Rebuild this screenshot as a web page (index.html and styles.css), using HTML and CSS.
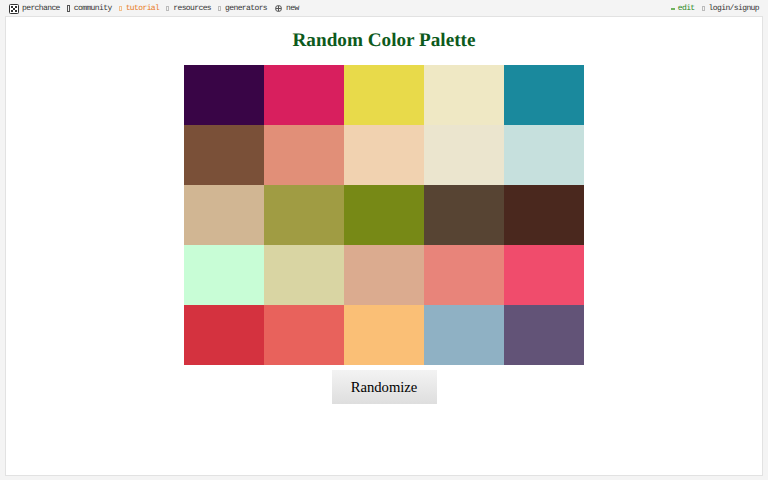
FILE: index.html
```html
<!DOCTYPE html>
<html lang="en">
<head>
<meta charset="utf-8">
<title>Random Color Palette</title>
<link rel="stylesheet" href="styles.css">
</head>
<body>
<nav class="topbar">
  <div class="links">
    <a class="link brand">
      <svg class="die" width="10" height="10" viewBox="0 0 10 10"><rect x="0.5" y="0.5" width="9" height="9" rx="1" fill="#fff" stroke="#333"/><rect x="2" y="2" width="2" height="2" fill="#333"/><rect x="6" y="2" width="2" height="2" fill="#333"/><rect x="4" y="4" width="2" height="2" fill="#333"/><rect x="2" y="6" width="2" height="2" fill="#333"/><rect x="6" y="6" width="2" height="2" fill="#333"/></svg>
      perchance</a>
    <a class="link"><span class="tofu tall"></span>community</a>
    <a class="link orange"><span class="tofu faint"></span>tutorial</a>
    <a class="link"><span class="tofu faint"></span>resources</a>
    <a class="link"><span class="tofu faint"></span>generators</a>
    <a class="link new">
      <svg class="globe" width="7" height="7" viewBox="0 0 7 7"><circle cx="3.5" cy="3.5" r="3" fill="none" stroke="#555"/><path d="M3.5 1V6M1 3.5H6" stroke="#555"/></svg>
      new</a>
  </div>
  <div class="links">
    <a class="link green"><span class="pencil"></span>edit</a>
    <a class="link"><span class="tofu faint"></span>login/signup</a>
  </div>
</nav>
<main class="panel">
  <h1 class="title">Random Color Palette</h1>
  <div class="palette">
    <div class="c" style="background:#390546"></div>
    <div class="c" style="background:#d81f5e"></div>
    <div class="c" style="background:#e8da4a"></div>
    <div class="c" style="background:#efe8c4"></div>
    <div class="c" style="background:#1a899d"></div>
    <div class="c" style="background:#7a5038"></div>
    <div class="c" style="background:#e18f78"></div>
    <div class="c" style="background:#f1d2b0"></div>
    <div class="c" style="background:#ebe5ce"></div>
    <div class="c" style="background:#c6e0dd"></div>
    <div class="c" style="background:#d1b693"></div>
    <div class="c" style="background:#a09c43"></div>
    <div class="c" style="background:#778916"></div>
    <div class="c" style="background:#574433"></div>
    <div class="c" style="background:#4a281e"></div>
    <div class="c" style="background:#c8fdd6"></div>
    <div class="c" style="background:#d9d5a3"></div>
    <div class="c" style="background:#dbab8f"></div>
    <div class="c" style="background:#e8847a"></div>
    <div class="c" style="background:#f04c6c"></div>
    <div class="c" style="background:#d4323f"></div>
    <div class="c" style="background:#e8625c"></div>
    <div class="c" style="background:#fabf76"></div>
    <div class="c" style="background:#8fb1c4"></div>
    <div class="c" style="background:#625377"></div>
  </div>
  <button class="btn">Randomize</button>
</main>
</body>
</html>
```
FILE: styles.css
```css
* { box-sizing: border-box; }
html, body { height: 100%; }
body {
  margin: 0;
  background: #f4f4f4;
  display: flex;
  flex-direction: column;
  overflow: hidden;
  text-rendering: geometricPrecision;
}
.topbar {
  height: 16px;
  flex: none;
  display: flex;
  justify-content: space-between;
  align-items: center;
  padding: 1px 9px 0 9px;
  font-family: "Liberation Mono", monospace;
  font-size: 8px;
  letter-spacing: -0.6px;
  color: #333;
}
.links { display: flex; align-items: center; gap: 7px; }
.link { display: flex; align-items: center; gap: 4px; white-space: nowrap; }
.orange { color: #e8791e; }
.green { color: #2a8a1e; }
.green { gap: 3px; }
.brand { gap: 3px; }
.new { margin-left: 1px; }
.tofu {
  display: inline-block;
  width: 3px;
  height: 5px;
  border: 1px solid #bbb;
}
.tofu.tall { height: 7px; border-color: #555; }
.tofu.faint { border-color: #bbb; }
.orange .tofu { border-color: #f2c08e; }
.pencil { display: inline-block; width: 4px; height: 2px; background: #6fb35f; }
.panel {
  flex: 1;
  margin: 0 5px 4px 5px;
  background: #fff;
  border: 1px solid #e2e2e2;
  display: flex;
  flex-direction: column;
  align-items: center;
}
.title {
  margin: 13px 0 0;
  font-family: "Liberation Serif", serif;
  font-size: 19.2px;
  line-height: 22px;
  font-weight: bold;
  color: #0d5a1c;
}
.palette {
  margin-top: 13px;
  display: grid;
  grid-template-columns: repeat(5, 80px);
  grid-auto-rows: 60px;
}
.btn {
  margin-top: 5px;
  width: 105px;
  height: 34px;
  border: 0;
  background: linear-gradient(#f3f3f3, #dedede);
  font-family: "Liberation Serif", serif;
  font-size: 14.67px;
  color: #000;
}
```
